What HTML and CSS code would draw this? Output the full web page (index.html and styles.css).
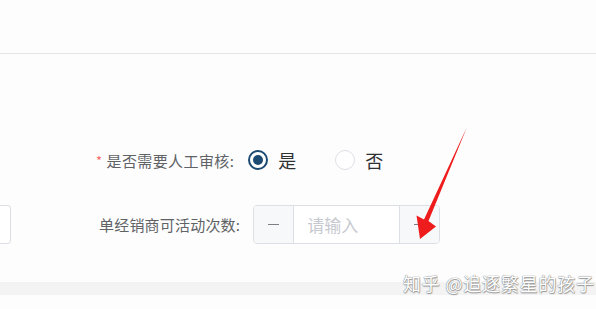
FILE: index.html
```html
<!DOCTYPE html>
<html lang="zh-CN">
<head>
  <meta charset="UTF-8" />
  <meta name="viewport" content="width=device-width, initial-scale=1.0" />
  <title>活动设置</title>
  <link rel="stylesheet" href="styles.css">
</head>
<body>
  <!-- ============================
       Top bar
       ============================ -->
  <header class="top-bar"></header>

  <!-- ============================
       Form
       ============================ -->
  <main class="form-area">
    <div class="form-row row-audit">
      <label class="form-label"><span class="required">*</span>是否需要人工审核:</label>
      <div class="radio-group">
        <span class="radio checked"><span class="radio-inner"></span><span class="radio-text">是</span></span>
        <span class="radio"><span class="radio-inner"></span><span class="radio-text">否</span></span>
      </div>
    </div>

    <div class="form-row row-count">
      <div class="cut-input"></div>
      <label class="form-label label-count">单经销商可活动次数:</label>
      <div class="input-number">
        <span class="step minus" aria-label="减少"><i class="bar"></i></span>
        <input type="text" class="step-input" placeholder="请输入" />
        <span class="step plus" aria-label="增加"><i class="bar"></i><i class="bar vertical"></i></span>
      </div>
    </div>
  </main>

  <div class="footer-band"></div>

  <!-- red arrow pointing at the plus button -->
  <svg class="arrow" width="596" height="309" viewBox="0 0 596 309">
    <polygon points="467,127 428.5,221 436,226.5 420,239 416.5,215.5 424,219.5" fill="#ee1c1c" />
  </svg>

  <div class="watermark">知乎 @追逐繁星的孩子</div>
</body>
</html>
```

FILE: styles.css
```css
/* ============================
   Basic Reset
   ============================ */
* {
  margin: 0;
  padding: 0;
  box-sizing: border-box;
}

body {
  width: 596px;
  height: 309px;
  overflow: hidden;
  position: relative;
  background: #fdfdfd;
  font-family: "Noto Sans CJK SC", "Microsoft YaHei", sans-serif;
  color: #606266;
}

/* ============================
   Top bar
   ============================ */
.top-bar {
  height: 54px;
  border-bottom: 1px solid #e6e6e6;
}

/* ============================
   Form
   ============================ */
.form-area {
  padding-top: 86px;
  height: 228px;
}

.form-row {
  display: flex;
  align-items: center;
  height: 40px;
}

.row-audit {
  padding-left: 96px;
}

.row-count {
  margin-top: 25px;
  height: 39px;
}

.form-label {
  font-size: 15px;
  color: #606266;
  white-space: nowrap;
}

.row-audit .form-label {
  letter-spacing: 0.4px;
}

.required {
  color: #f56c6c;
  font-size: 13px;
  margin-right: 4px;
  position: relative;
  top: -1px;
}

/* radio group */
.radio-group {
  display: flex;
  align-items: center;
  margin-left: 14px;
}

.radio {
  display: flex;
  align-items: center;
  margin-right: 39px;
}

.radio-inner {
  width: 20px;
  height: 20px;
  border: 1px solid #dcdfe6;
  border-radius: 50%;
  background: #fff;
  position: relative;
}

.radio.checked .radio-inner {
  border: 2px solid #1c4a72;
}

.radio.checked .radio-inner::after {
  content: "";
  position: absolute;
  left: 3px;
  top: 3px;
  width: 10px;
  height: 10px;
  border-radius: 50%;
  background: #1c4a72;
}

.radio-text {
  margin-left: 10px;
  font-size: 18px;
  color: #303133;
}

/* cut-off input on the left edge */
.cut-input {
  width: 11px;
  height: 39px;
  border: 1px solid #dcdfe6;
  border-left: none;
  border-radius: 0 4px 4px 0;
  background: #fff;
}

.label-count {
  margin-left: 88px;
  letter-spacing: 0.2px;
}

/* number input */
.input-number {
  display: flex;
  height: 39px;
  margin-left: 13px;
  width: 187px;
  border: 1px solid #dcdfe6;
  border-radius: 4px;
  background: #fff;
  overflow: hidden;
}

.step {
  width: 40px;
  position: relative;
  background: #f7f8fa;
}

.step .bar {
  position: absolute;
  left: 14px;
  top: 18px;
  width: 11px;
  height: 1px;
  background: #7b7e84;
}

.step .bar.vertical {
  left: 19px;
  top: 13px;
  width: 1px;
  height: 11px;
}

.minus {
  border-right: 1px solid #dcdfe6;
}

.plus {
  border-left: 1px solid #dcdfe6;
}

.step-input {
  flex: 1;
  min-width: 0;
  border: none;
  outline: none;
  padding-left: 13px;
  font-size: 17px;
  font-family: "Noto Sans CJK SC", sans-serif;
  background: #fff;
}

.step-input::placeholder {
  color: #c6c9cf;
}

/* ============================
   Footer band
   ============================ */
.footer-band {
  height: 13px;
  background: #f3f3f3;
}

/* ============================
   Overlays
   ============================ */
.arrow {
  position: absolute;
  left: 0;
  top: 0;
}

.watermark {
  position: absolute;
  left: 403px;
  top: 270px;
  font-size: 18px;
  letter-spacing: 0.8px;
  color: #fff;
  white-space: nowrap;
  text-shadow: 0 0 1px #888, 0 0 1px #888, 0.5px 0.5px 1px #999;
}
```
